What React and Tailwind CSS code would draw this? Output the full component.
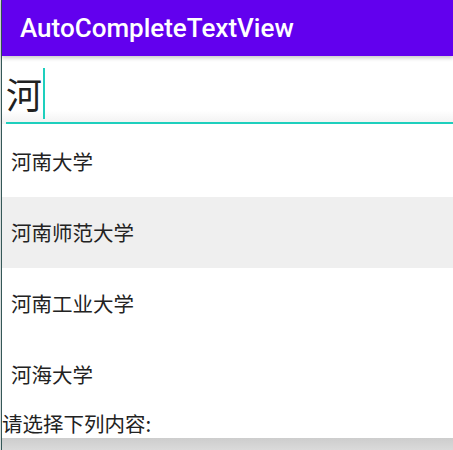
export default function App() {
  const items = ["河南大学", "河南师范大学", "河南工业大学", "河海大学"];
  const cjk = { fontFamily: '"Noto Sans CJK SC", "Noto Sans", sans-serif' };
  return (
    <div className="flex w-[453px] h-[450px] overflow-hidden bg-white">
      <div className="w-px bg-[#d8dcdc]" />
      <div className="w-px bg-[#355858]" />
      <div className="relative flex-1 flex flex-col">
        <div
          className="relative z-10 h-[56px] bg-[#6200EE] flex items-center pl-[18px] pt-[1px] text-white text-[26px] font-medium shadow-[0_2px_4px_rgba(0,0,0,0.22)]"
          style={{ fontFamily: 'Roboto, "Noto Sans", sans-serif' }}
        >
          AutoCompleteTextView
        </div>
        <div className="h-[68px] flex flex-col bg-gradient-to-b from-white from-[80%] to-[#f1f1f1]">
          <div className="flex items-center pt-[12px] pl-[4px]">
            <span className="text-[36px] leading-[51px] text-[#212121]" style={cjk}>
              河
            </span>
            <div className="w-[2px] h-[51px] bg-[#1ecfbd] ml-[1px]" />
          </div>
          <div className="mt-[3px] ml-[4px] h-[2px] bg-[#1ecfbd]" />
        </div>
        <div className="h-[285px]" />
        <div className="text-[20.5px] leading-[29px] text-[#222]" style={cjk}>
          请选择下列内容:
        </div>
        <div className="flex-1 bg-gradient-to-b from-[#cdcdcd] to-[#dadada]" />

        <div className="absolute left-0 right-0 top-[126px] z-20 bg-white">
          {items.map((t, i) => (
            <div
              key={t}
              className={`h-[71px] flex items-center pl-[9px] text-[20.5px] text-[#222] ${
                i === 1 ? "bg-[#efefef]" : "bg-white"
              }`}
              style={cjk}
            >
              {t}
            </div>
          ))}
        </div>
      </div>
    </div>
  );
}
